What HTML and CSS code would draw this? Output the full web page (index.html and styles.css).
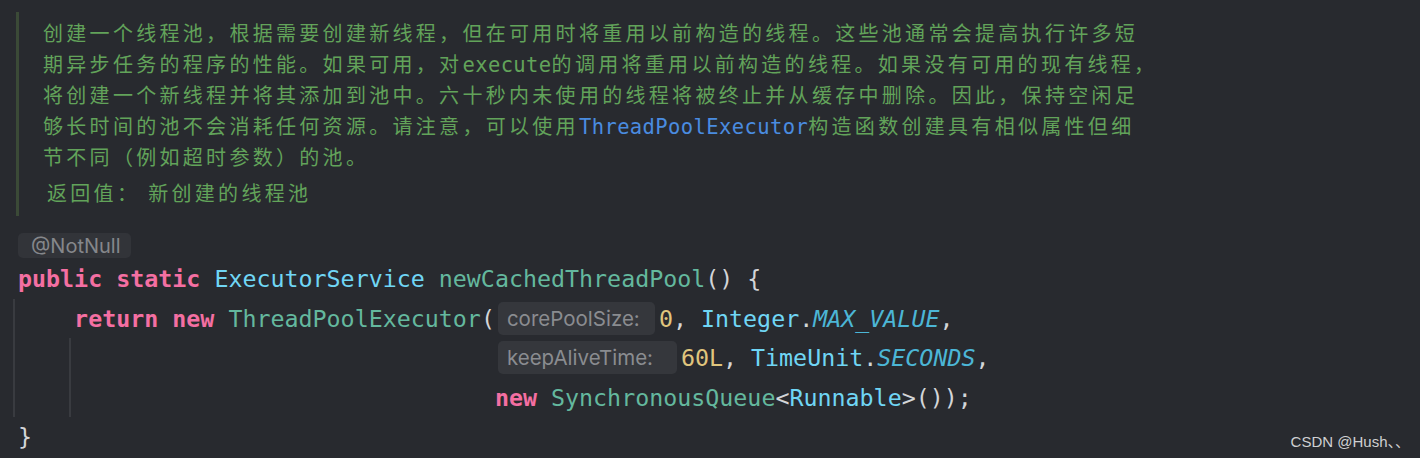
FILE: index.html
```html
<!DOCTYPE html>
<html lang="zh">
<head>
<meta charset="utf-8">
<title>newCachedThreadPool</title>
<link rel="stylesheet" href="styles.css">
</head>
<body>
<div class="page">
  <div class="doc">
    <p class="doc-text">创建一个线程池，根据需要创建新线程，但在可用时将重用以前构造的线程。这些池通常会提高执行许多短<br>期异步任务的程序的性能。如果可用，对<code class="doc-code">execute</code>的调用将重用以前构造的线程。如果没有可用的现有线程，<br>将创建一个新线程并将其添加到池中。六十秒内未使用的线程将被终止并从缓存中删除。因此，保持空闲足<br>够长时间的池不会消耗任何资源。请注意，可以使用<code class="doc-code link">ThreadPoolExecutor</code>构造函数创建具有相似属性但细<br>节不同（例如超时参数）的池。</p>
    <p class="doc-return"><span class="ret-label">返回值：</span><span class="ret-value">新创建的线程池</span></p>
  </div>
  <div class="anno-row"><span class="anno">@NotNull</span></div>
  <div class="code">
    <div class="line"><span class="kw">public</span> <span class="kw">static</span> <span class="type">ExecutorService</span> <span class="fn">newCachedThreadPool</span><span class="p">() {</span></div>
    <div class="guide1">
      <div class="line">    <span class="kw">return</span> <span class="kw">new</span> <span class="fn">ThreadPoolExecutor</span><span class="p">(</span><span class="hint h1">corePoolSize:</span><span class="num">0</span><span class="p">, </span><span class="type">Integer</span><span class="p">.</span><span class="const">MAX_VALUE</span><span class="p">,</span></div>
      <div class="guide2">
        <div class="line">                                  <span class="hint h2">keepAliveTime:</span><span class="num">60L</span><span class="p">, </span><span class="type">TimeUnit</span><span class="p">.</span><span class="const">SECONDS</span><span class="p">,</span></div>
        <div class="line">                                  <span class="kw">new</span> <span class="fn">SynchronousQueue</span><span class="p">&lt;</span><span class="type">Runnable</span><span class="p">&gt;());</span></div>
      </div>
    </div>
    <div class="line"><span class="p">}</span></div>
  </div>
  <div class="watermark">CSDN @Hush、、</div>
</div>
</body>
</html>
```

FILE: styles.css
```css
html, body {
  margin: 0;
  padding: 0;
  background: #282a2f;
}
.page {
  position: relative;
  width: 1420px;
  height: 458px;
  overflow: hidden;
  background: #282a2f;
  padding-top: 12px;
  box-sizing: border-box;
}
.doc {
  margin-left: 16px;
  border-left: 3px solid #3b4a37;
  padding: 5px 0 8px 24px;
  width: 1120px;
}
.doc-text {
  margin: 0;
  font-family: "Noto Sans CJK SC", "Noto Sans", sans-serif;
  font-size: 20px;
  letter-spacing: 3.3px;
  line-height: 31px;
  color: #62a35a;
  white-space: nowrap;
}
.doc-code {
  font-family: "DejaVu Sans Mono", monospace;
  font-size: 20.5px;
  line-height: 1;
  letter-spacing: 0.4px;
  color: #62a35a;
}
.doc-code.link {
  color: #4a8ce0;
}
.doc-return {
  margin: 5px 0 0 4px;
  font-family: "Noto Sans CJK SC", "Noto Sans", sans-serif;
  font-size: 20px;
  letter-spacing: 3.3px;
  line-height: 31px;
  color: #62a35a;
  display: flex;
  gap: 8px;
}
.anno-row {
  margin-top: 17px;
  padding-left: 18px;
  height: 25px;
  display: flex;
}
.anno {
  display: inline-flex;
  align-items: center;
  height: 25px;
  padding: 0 10px 0 13px;
  background: #323439;
  border-radius: 5px;
  font-family: "Inter", "Noto Sans", sans-serif;
  font-size: 20px;
  color: #85878b;
}
.code {
  margin-top: 1px;
  font-family: "DejaVu Sans Mono", monospace;
  font-size: 23.3px;
  color: #d3d5d8;
}
.line {
  white-space: pre;
  height: 39.5px;
  line-height: 39.5px;
  padding-left: 18px;
}
.guide1 {
  background: linear-gradient(#393b40, #393b40) no-repeat 13px 0 / 2px 100%;
}
.guide2 {
  background: linear-gradient(#393b40, #393b40) no-repeat 69px 0 / 2px 100%;
}
.kw { color: #f46fa2; font-weight: bold; }
.type { color: #70d6f5; }
.fn { color: #64b89e; }
.num { color: #e0c57d; }
.const { color: #4cb6d6; font-style: italic; }
.p { color: #d3d5d8; }
.hint {
  display: inline-block;
  vertical-align: middle;
  height: 33px;
  line-height: 33px;
  margin: -4px 4px 0 3px;
  padding: 0 6px 0 9px;
  background: #35373c;
  border-radius: 5px;
  font-family: "Inter", "Noto Sans", sans-serif;
  font-size: 20.5px;
  color: #8a8c90;
  box-sizing: border-box;
}
.h1 { width: 157px; }
.h2 { width: 179px; }
.watermark {
  position: absolute;
  right: 10px;
  bottom: 7px;
  font-family: "Liberation Sans", Arial, "Noto Sans CJK SC", sans-serif;
  font-size: 15px;
  color: #cfd0d2;
}
```
